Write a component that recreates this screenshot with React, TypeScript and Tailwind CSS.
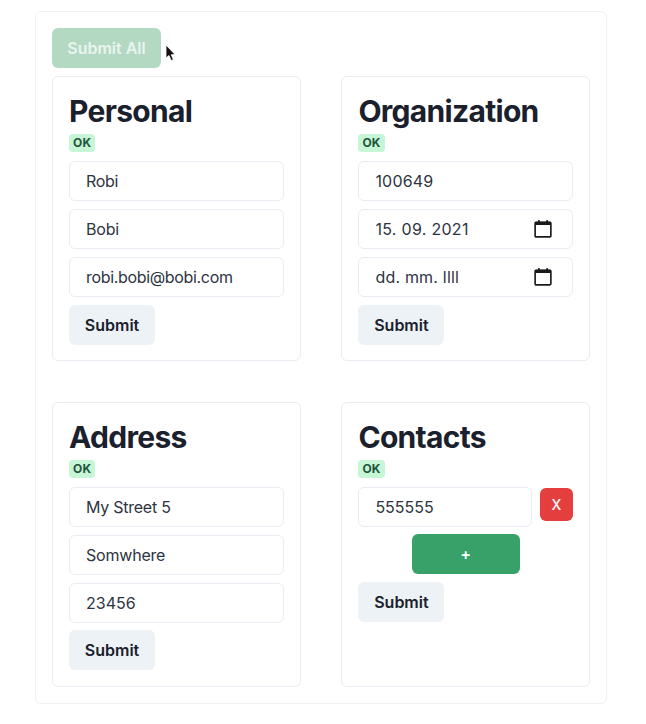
const font = "font-['Inter',sans-serif]";

function Field({ value, date, className = "" }: { value: string; date?: boolean; className?: string }) {
  return (
    <div className="relative">
      <input
        readOnly
        value={value}
        className={`block h-10 w-full rounded-md border border-[#e8ecf2] bg-white px-4 text-base text-[#2d3442] outline-none ${className}`}
      />
      {date && (
        <svg
          viewBox="0 0 16 16"
          className="absolute right-[19.5px] top-[9.5px] h-[20px] w-[20px] text-[#1a1a1a]"
          fill="none"
        >
          <rect x="1.7" y="2.6" width="12.6" height="11.7" rx="0.8" stroke="currentColor" strokeWidth="1.3" />
          <rect x="1.7" y="2.2" width="12.6" height="2.6" fill="currentColor" />
          <rect x="4" y="0.9" width="1.4" height="2" fill="currentColor" />
          <rect x="10.6" y="0.9" width="1.4" height="2" fill="currentColor" />
        </svg>
      )}
    </div>
  );
}

function SubmitButton({ className = "" }: { className?: string }) {
  return (
    <button className={`h-10 w-[86px] rounded-md bg-[#edf2f7] text-base font-semibold text-[#1a202c] ${className}`}>
      Submit
    </button>
  );
}

function Card({ title, children }: { title: string; children: React.ReactNode }) {
  return (
    <section className="flex h-[285px] flex-col rounded-md border border-[#e8ecf2] p-4">
      <h2 className="text-[30px] leading-9 font-bold tracking-[-0.7px] text-[#1a202c]">{title}</h2>
      <div className="mt-[5px] mb-[9px] flex">
        <span className="rounded-sm bg-[#c6f6d5] px-1 text-xs leading-[18px] font-bold tracking-[0.2px] text-[#22543d]">OK</span>
      </div>
      <div className="flex flex-col gap-2">{children}</div>
    </section>
  );
}

export default function App() {
  return (
    <div className={`${font} min-h-[724px] bg-white px-[35px] pt-[11px]`}>
      <div className="relative h-[693px] w-[572px] rounded-md border border-[#eef1f5] px-4 pt-4">
        <button className="h-10 w-[109px] rounded-md bg-[#b3d9c3] text-base font-semibold text-[#e9f4ee]">
          Submit All
        </button>
        <svg viewBox="0 0 12 20" className="absolute left-[129px] top-[32px] h-[20px] w-[12px]">
          <path d="M1 1 L1 14 L4 11.5 L6.2 16.5 L8.4 15.5 L6.2 10.8 L10 10.5 Z" fill="#111" stroke="#fff" strokeWidth="0.8" />
        </svg>
        <div className="mt-2 grid grid-cols-[249px_248.6px] gap-x-[40.4px] gap-y-[41px]">
          <Card title="Personal">
            <Field value="Robi" className="tracking-[-0.3px]" />
            <Field value="Bobi" className="tracking-[-0.2px]" />
            <Field value="robi.bobi@bobi.com" className="tracking-[-0.33px]" />
            <SubmitButton />
          </Card>
          <Card title="Organization">
            <Field value="100649" className="tracking-[0.2px]" />
            <Field value="15. 09. 2021" date className="tracking-[0.3px]" />
            <Field value="dd. mm. llll" date className="tracking-[0.2px]" />
            <SubmitButton />
          </Card>
          <Card title="Address">
            <Field value="My Street 5" className="tracking-[-0.25px]" />
            <Field value="Somwhere" className="tracking-[-0.2px]" />
            <Field value="23456" />
            <SubmitButton className="-mt-px" />
          </Card>
          <Card title="Contacts">
            <div className="flex items-start gap-2">
              <div className="flex-1">
                <Field value="555555" />
              </div>
              <button className="mt-px h-[33px] w-[33px] rounded-md bg-[#e53e3e] text-sm font-medium text-white">X</button>
            </div>
            <div className="-mt-px flex justify-center">
              <button className="h-10 w-[108px] rounded-md bg-[#38a169] text-base font-semibold text-white">+</button>
            </div>
            <SubmitButton />
          </Card>
        </div>
      </div>
    </div>
  );
}
